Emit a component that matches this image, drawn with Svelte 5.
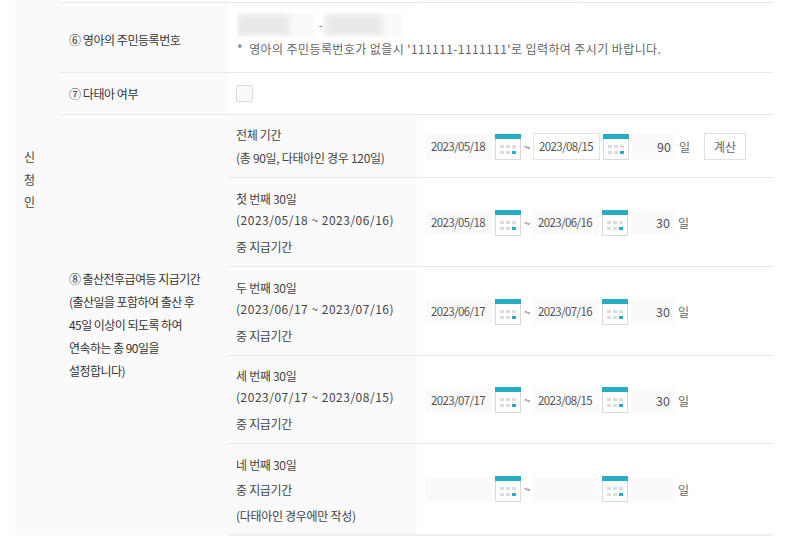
<script lang="ts">
	type Period = {
		lines: string[];
		from: string;
		to: string;
		days: string;
		total?: boolean;
	};

	const periods: Period[] = [
		{ lines: ['전체 기간', '(총 90일, 다태아인 경우 120일)'], from: '2023/05/18', to: '2023/08/15', days: '90', total: true },
		{ lines: ['첫 번째 30일', '(2023/05/18 ~ 2023/06/16)', '중 지급기간'], from: '2023/05/18', to: '2023/06/16', days: '30' },
		{ lines: ['두 번째 30일', '(2023/06/17 ~ 2023/07/16)', '중 지급기간'], from: '2023/06/17', to: '2023/07/16', days: '30' },
		{ lines: ['세 번째 30일', '(2023/07/17 ~ 2023/08/15)', '중 지급기간'], from: '2023/07/17', to: '2023/08/15', days: '30' },
		{ lines: ['네 번째 30일', '중 지급기간', '(다태아인 경우에만 작성)'], from: '', to: '', days: '' }
	];
	const heights = [63, 89, 89, 88, 91];
</script>

{#snippet calendar()}
	<svg class="cal" width="26" height="26" viewBox="0 0 26 26" aria-hidden="true">
		<rect x="0.5" y="0.5" width="25" height="25" fill="#fff" stroke="#d9d9d9" />
		<rect x="0" y="0" width="26" height="5" fill="#25adc3" />
		<g fill="#dcdcdc">
			<rect x="5" y="11" width="4" height="3" />
			<rect x="11" y="11" width="4" height="3" />
			<rect x="17" y="11" width="4" height="3" />
			<rect x="5" y="17" width="4" height="3" />
			<rect x="11" y="17" width="4" height="3" />
		</g>
		<rect x="17" y="17" width="4" height="3" fill="#25adc3" />
	</svg>
{/snippet}

<main>
	<table>
		<colgroup>
			<col class="c-side" />
			<col class="c-label" />
			<col class="c-sub" />
			<col />
		</colgroup>
		<tbody>
			<tr class="r-top">
				<th class="side" rowspan="8"><span>신<br />청<br />인</span></th>
				<th></th>
				<td colspan="2" class="prev"><div></div></td>
			</tr>
			<tr class="r-rrn">
				<th class="label rrn-label">⑥ 영아의 주민등록번호</th>
				<td colspan="2" class="rrn">
					<div class="rrn-inputs">
						<div class="masked"><i></i></div>
						<span class="dash">-</span>
						<div class="masked second"><i></i></div>
					</div>
					<p>*&nbsp; 영아의 주민등록번호가 없을시 '111111-1111111'로 입력하여 주시기 바랍니다.</p>
				</td>
			</tr>
			<tr class="r-multi">
				<th class="label">⑦ 다태아 여부</th>
				<td colspan="2" class="check"><span class="box"></span></td>
			</tr>
			{#each periods as p, i}
				<tr style="height: {heights[i]}px">
					{#if i === 0}
						<th class="label long" rowspan="5">
							<div>⑧ 출산전후급여등 지급기간</div>
							<div>(출산일을 포함하여 출산 후</div>
							<div>45일 이상이 되도록 하여</div>
							<div>연속하는 총 90일을</div>
							<div>설정합니다)</div>
						</th>
					{/if}
					<th class="sub" class:tight={i >= 1 && i <= 3} class:spread={i === 4}>
						{#each p.lines as line}
							<div>{line}</div>
						{/each}
					</th>
					<td class="dates">
						<div class="date-row">
							<span class="field date">{p.from}</span>
							{@render calendar()}
							<span class="tilde">~</span>
							<span class="field date" class:bordered={p.total}>{p.to}</span>
							{@render calendar()}
							<span class="field num">{p.days}</span>
							<span class="unit">일</span>
							{#if p.total}
								<button type="button">계산</button>
							{/if}
						</div>
					</td>
				</tr>
			{/each}
		</tbody>
	</table>
</main>

<style>
	:global(body) {
		margin: 0;
		background: #fff;
	}

	main {
		width: 800px;
		height: 539px;
		overflow: hidden;
		padding: 0 27px 0 15px;
		box-sizing: border-box;
		font-family: "Noto Sans CJK KR", "Noto Sans", sans-serif;
		font-size: 12px;
		color: #555;
	}

	table {
		width: 758px;
		table-layout: fixed;
		border-collapse: collapse;
	}

	.c-side { width: 45px; }
	.c-label { width: 167px; }
	.c-sub { width: 190px; }

	th {
		background: #fafafa;
		font-weight: 400;
		text-align: left;
		padding: 0;
	}

	td {
		padding: 0;
		background: #fff;
	}

	tr + tr th:not(.side),
	tr + tr td {
		border-top: 1px solid #e8e8e8;
	}

	.r-top { height: 2px; }
	.r-rrn { height: 70px; }
	.r-multi { height: 42px; }

	.prev {
		padding-left: 190px;
	}

	.prev div {
		width: 166px;
		height: 2px;
		background: #fafafa;
	}

	tr:last-child th,
	tr:last-child td {
		border-bottom: 2px solid #efefef;
	}

	.side {
		vertical-align: top;
		padding: 146px 16px 0 0;
		text-align: center;
		color: #444;
		line-height: 22.5px;
	}

	.side span {
		display: block;
	}

	.label {
		padding-left: 9px;
		color: #333;
		letter-spacing: -0.45px;
	}

	.rrn-label {
		padding-top: 3px;
	}

	.long {
		letter-spacing: -0.55px;
		vertical-align: top;
		padding-top: 152px;
	}

	.long div {
		line-height: 23px;
	}

	.rrn {
		padding-left: 10px;
		vertical-align: top;
		padding-top: 10px;
	}

	.rrn-inputs {
		display: flex;
		align-items: center;
		height: 24px;
	}

	.masked {
		width: 77px;
		height: 24px;
		background: #fafafa;
		overflow: hidden;
	}

	.masked i {
		display: block;
		width: 52px;
		height: 20px;
		margin-top: 2px;
		background: #e8e8e8;
		filter: blur(3px);
	}

	.second {
		width: 79px;
	}

	.second i {
		margin-left: 3px;
		width: 56px;
	}

	.dash {
		width: 9px;
		text-align: right;
		color: #777;
		line-height: 20px;
	}

	.rrn p {
		margin: 0;
		padding-top: 3px;
		line-height: 18px;
		color: #666;
		letter-spacing: 0.4px;
	}

	.check {
		padding-left: 9px;
	}

	.box {
		display: block;
		width: 15px;
		height: 15px;
		border: 1px solid #ddd;
		border-radius: 2px;
		background: #f9f9f9;
	}

	.sub {
		padding-left: 9px;
		color: #444;
		line-height: 23px;
		letter-spacing: -0.3px;
	}

	.sub div:nth-child(3) {
		padding-top: 5px;
	}

	.sub.tight div:nth-child(2) {
		letter-spacing: 0.5px;
		line-height: 20px;
	}

	.sub.spread {
		line-height: 25.5px;
		padding-top: 2px;
	}

	.sub.spread div:nth-child(3) {
		padding-top: 0;
	}

	.dates {
		padding-left: 9px;
	}

	.date-row {
		display: flex;
		align-items: center;
		height: 27px;
		margin-top: 1px;
	}

	.field {
		display: block;
		box-sizing: border-box;
		height: 25px;
		line-height: 25px;
		background: #fafafa;
		color: #555;
	}

	.date {
		width: 66px;
		padding-left: 5px;
		font-size: 11.5px;
		letter-spacing: -0.6px;
		flex: none;
	}

	.bordered {
		width: 67px;
		height: 27px;
		line-height: 25px;
		background: #fff;
		border: 1px solid #e3e3e3;
	}

	.cal {
		flex: none;
		margin-left: 3px;
	}

	.tilde {
		width: 12px;
		text-align: center;
		color: #666;
		line-height: 20px;
	}

	.num {
		width: 43px;
		margin-left: 3px;
		text-align: right;
		padding-right: 4px;
		font-size: 12.5px;
	}

	.unit {
		margin-left: 4px;
		width: 12px;
		color: #666;
	}

	button {
		margin-left: 13px;
		width: 42px;
		height: 27px;
		box-sizing: border-box;
		padding: 0;
		background: #fff;
		border: 1px solid #e0e0e0;
		color: #666;
		font: inherit;
	}
</style>
